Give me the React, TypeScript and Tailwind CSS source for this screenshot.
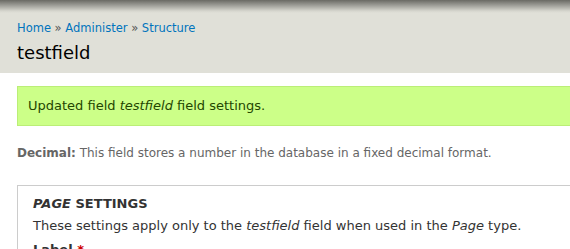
import React from 'react';

export default function App() {
  return (
    <div className="w-[570px] h-[249px] overflow-hidden bg-white font-['DejaVu_Sans',sans-serif]">
      <div className="h-[73px] bg-[#e0e0d8] bg-[linear-gradient(to_bottom,#6a6a64_0px,#9a9a94_5px,#d6d6ce_11px,#e0e0d8_13px)] px-[17px] pt-[20px]">
        <div className="text-[11.5px] leading-[16px] text-[#0074bd]">
          <span>Home</span>
          <span className="text-[#555]"> » </span>
          <span>Administer</span>
          <span className="text-[#555]"> » </span>
          <span>Structure</span>
        </div>
        <h1 className="mt-[5px] text-[18px] leading-[24px] text-black">testfield</h1>
      </div>

      <div className="ml-[17px] mt-[13px] h-[40px] border border-r-0 border-[#bbee77] bg-[#ccff88] pl-[10px] text-[13px] leading-[38px] text-[#234600]">
        Updated field <em>testfield</em> field settings.
      </div>

      <p className="ml-[17px] mt-[18px] text-[12px] leading-[18px] text-[#666]">
        <strong>Decimal:</strong> This field stores a number in the database in a fixed decimal format.
      </p>

      <div className="ml-[17px] mt-[23px] border border-r-0 border-[#ccc] pl-[15px] pt-[8px] text-[#333]">
        <h2 className="text-[13px] font-bold leading-[20px]">
          <em>PAGE</em> SETTINGS
        </h2>
        <p className="mt-[2px] text-[13px] leading-[20px]">
          These settings apply only to the <em>testfield</em> field when used in the <em>Page</em> type.
        </p>
        <div className="mt-[4px] text-[13px] font-bold leading-[20px]">
          Label <span className="text-[#cc0000]">*</span>
        </div>
      </div>
    </div>
  );
}
